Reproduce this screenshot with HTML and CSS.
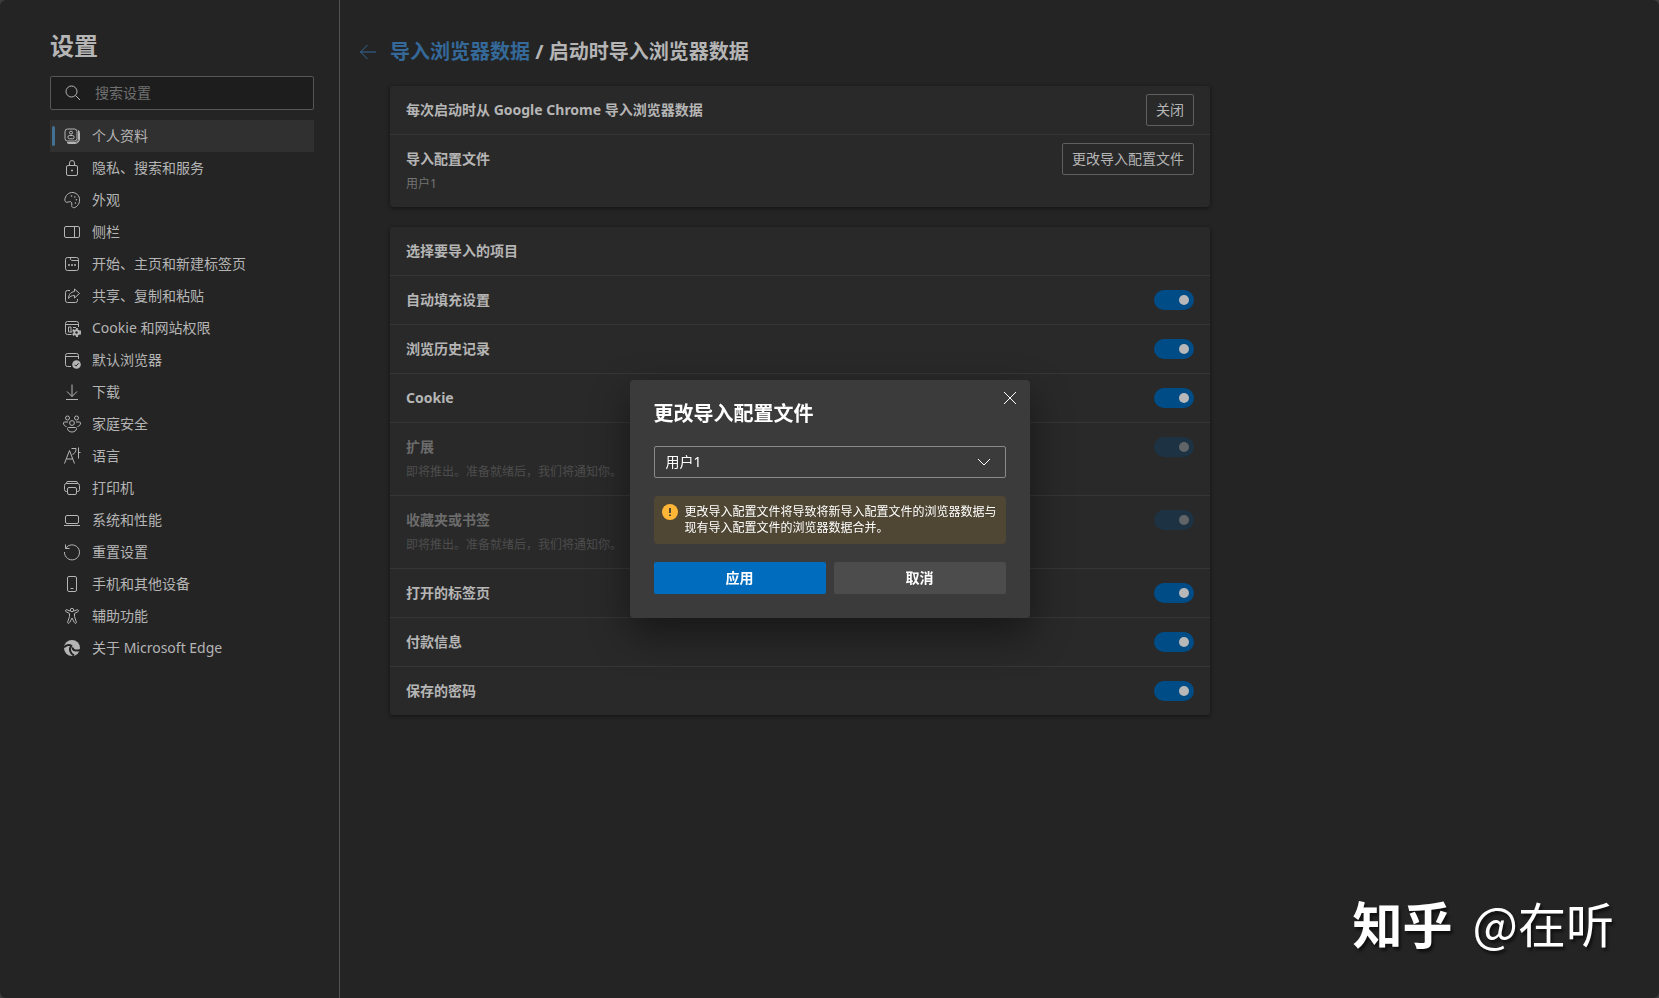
FILE: index.html
```
<!DOCTYPE html>
<html lang="zh-CN">
<head>
    <meta charset="UTF-8">
    <meta name="viewport" content="width=device-width, initial-scale=1.0">
    <title>设置</title>
    <link rel="stylesheet" href="styles.css">
</head>
<body>
    <div class="page">
        <aside class="sidebar">
            <h1 class="sidebar-title">设置</h1>
            <label class="search">
                <svg class="icon" viewBox="0 0 20 20"><circle cx="8.5" cy="8.5" r="5.5"/><path d="M12.5 12.5 17 17"/></svg>
                <input type="search" placeholder="搜索设置" aria-label="搜索设置">
            </label>
            <nav>
                <ul class="menu">
                    <li><a href="#" class="active">
                        <svg class="icon" viewBox="0 0 20 20"><rect x="3" y="3" width="12" height="12" rx="2.5"/><path d="M16.5 4.5c.7.5 1 1.200 1 2v6.500a4.500 4.500 0 0 1-4.500 4.500H7c-.8 0-1.500-.4-2-1h8a3.500 3.500 0 0 0 3.500-3.500z"/><circle cx="9" cy="6.700" r="1.500"/><rect x="6" y="9.500" width="6" height="3.300" rx="1.400"/></svg>
                        个人资料</a></li>
                    <li><a href="#">
                        <svg class="icon" viewBox="0 0 20 20"><rect x="4.500" y="7.500" width="11" height="10" rx="1.500"/><path d="M7.500 7.500V5a2.500 2.500 0 0 1 5 0v2.500"/><circle class="solid" cx="10" cy="12.500" r="1"/></svg>
                        隐私、搜索和服务</a></li>
                    <li><a href="#">
                        <svg class="icon" viewBox="0 0 20 20"><path d="M3 8.500C4.200 4 8.500 1.500 12.500 2.800c4.300 1.400 6.200 6.200 4.500 10.300-1.300 3.200-4.400 5.400-6.400 4.300-1.800-1-.2-3-1-4.700-.7-1.500-2-1.100-3.400-.6-2.400.8-4-.8-3.200-3.600z"/><circle class="solid" cx="9.500" cy="6" r=".8"/><circle class="solid" cx="12.800" cy="7" r=".8"/><circle class="solid" cx="14.400" cy="9.800" r=".8"/><circle class="solid" cx="13.400" cy="13" r=".8"/></svg>
                        外观</a></li>
                    <li><a href="#">
                        <svg class="icon" viewBox="0 0 20 20"><rect x="2.500" y="4.500" width="15" height="11" rx="1.500"/><path d="M12.500 4.500v11"/></svg>
                        侧栏</a></li>
                    <li><a href="#">
                        <svg class="icon" viewBox="0 0 20 20"><rect x="3.500" y="3.500" width="13" height="13" rx="2"/><path d="M8.500 3.500v1.500c0 .8.700 1.500 1.500 1.500h6.500"/><circle class="solid" cx="7" cy="11" r="1"/><circle class="solid" cx="10" cy="11" r="1"/><circle class="solid" cx="13" cy="11" r="1"/></svg>
                        开始、主页和新建标签页</a></li>
                    <li><a href="#">
                        <svg class="icon" viewBox="0 0 20 20"><path d="M8 4.500H5.500a2 2 0 0 0-2 2v8a2 2 0 0 0 2 2h8a2 2 0 0 0 2-2V13"/><path d="M12.500 3 17.500 7.500l-5 4.500V9.500c-3 0-4.700 1-6 3 .2-3.800 2-6.500 6-7z"/></svg>
                        共享、复制和粘贴</a></li>
                    <li><a href="#">
                        <svg class="icon" viewBox="0 0 20 20"><path d="M9.500 16.500h-4a2 2 0 0 1-2-2v-9a2 2 0 0 1 2-2h9a2 2 0 0 1 2 2V9M3.500 6.500h13M10 14H6.500V9H9v5M11 9.500h3"/><circle class="dots" cx="14.500" cy="14.500" r="3.600"/><circle class="solid" cx="14.500" cy="14.500" r="3.200"/><circle class="hole" cx="14.500" cy="14.500" r="1.200"/></svg>
                        Cookie 和网站权限</a></li>
                    <li><a href="#">
                        <svg class="icon" viewBox="0 0 20 20"><path d="M9 16.500H5.500a2 2 0 0 1-2-2v-9a2 2 0 0 1 2-2h9a2 2 0 0 1 2 2V9M3.500 6.500h13"/><circle class="solid" cx="14.500" cy="14.500" r="4.300"/><path class="cut" d="m12.500 14.700 1.400 1.400 2.700-2.800"/></svg>
                        默认浏览器</a></li>
                    <li><a href="#">
                        <svg class="icon" viewBox="0 0 20 20"><path d="M10 2.500v12M5 9.500l5 5 5-5M4 17.500h12"/></svg>
                        下载</a></li>
                    <li><a href="#">
                        <svg class="icon" viewBox="0 0 20 20"><circle cx="5.500" cy="4" r="2"/><circle cx="14.500" cy="4" r="2"/><circle cx="10" cy="9" r="2.400"/><path d="M6.500 13.500h7c.8 0 1 .5 1 1 0 2-2 3.500-4.500 3.500s-4.500-1.500-4.500-3.500c0-.5.200-1 1-1zM6 8H2.500c-.6 0-1 .3-1 1 0 2 1.300 3.300 3 3.500M14 8h3.500c.6 0 1 .3 1 1 0 2-1.300 3.300-3 3.500"/></svg>
                        家庭安全</a></li>
                    <li><a href="#">
                        <svg class="icon" viewBox="0 0 20 20"><path d="m2.500 17.500 5-13 5 13M4.500 13h6M9.500 2.500h4.500c0 3-1.200 5-3.500 6M16.500 1.500v11M16.500 6.500h2"/></svg>
                        语言</a></li>
                    <li><a href="#">
                        <svg class="icon" viewBox="0 0 20 20"><path d="M5.500 13.500h-1a2 2 0 0 1-2-2v-4a2 2 0 0 1 2-2h11a2 2 0 0 1 2 2v4a2 2 0 0 1-2 2h-1M4.500 5.500v-.5a1.500 1.500 0 0 1 1.500-1.500h8a1.500 1.500 0 0 1 1.500 1.500v.5"/><rect x="5.500" y="9.500" width="9" height="7" rx="1.500"/></svg>
                        打印机</a></li>
                    <li><a href="#">
                        <svg class="icon" viewBox="0 0 20 20"><rect x="3.500" y="5.500" width="13" height="8" rx="1.500"/><path d="M2 15.500h16"/></svg>
                        系统和性能</a></li>
                    <li><a href="#">
                        <svg class="icon" viewBox="0 0 20 20"><path d="M3.500 2.500v4h4M3.700 6.300A7.500 7.500 0 1 1 2.500 10"/></svg>
                        重置设置</a></li>
                    <li><a href="#">
                        <svg class="icon" viewBox="0 0 20 20"><rect x="5.500" y="2.500" width="9" height="15" rx="1.500"/><path d="M8.500 14.500h3"/></svg>
                        手机和其他设备</a></li>
                    <li><a href="#">
                        <svg class="icon" viewBox="0 0 20 20"><circle cx="10" cy="4" r="1.700"/><path d="M8.300 5.200 5 3.800c-1.500-.5-2.200 1.300-.8 2L7.500 7.500v3l-1.800 5.300c-.5 1.600 1.300 2.200 1.900.8L10 12l2.400 4.600c.6 1.400 2.400.8 1.900-.8l-1.800-5.300v-3l3.300-1.700c1.400-.7.700-2.500-.8-2l-3.300 1.400"/></svg>
                        辅助功能</a></li>
                    <li><a href="#">
                        <svg class="icon" viewBox="0 0 20 20"><circle class="solid" cx="10" cy="10" r="8"/><path class="swirl" d="M2 9.500c2-3 6.500-3.300 8-1M9.300 8.200C6.800 10.500 8 15.500 12 17.500M11 9.500c-.8 2.500 2.500 4 7 2.500"/></svg>
                        关于 Microsoft Edge</a></li>
                </ul>
            </nav>
        </aside>

        <main class="content">
            <h2 class="breadcrumb">
                <a href="#" class="back" aria-label="返回">
                    <svg class="icon" viewBox="0 0 20 20"><path d="M18 10H2.500M9.500 3l-7 7 7 7"/></svg>
                </a>
                <span><a href="#">导入浏览器数据</a> / 启动时导入浏览器数据</span>
            </h2>

            <section class="card">
                <div class="row">
                    <div class="label">每次启动时从 Google Chrome 导入浏览器数据</div>
                    <button type="button" class="btn">关闭</button>
                </div>
                <div class="row tall">
                    <div>
                        <div class="label">导入配置文件</div>
                        <div class="hint">用户1</div>
                    </div>
                    <button type="button" class="btn">更改导入配置文件</button>
                </div>
            </section>

            <section class="card">
                <div class="row"><div class="label">选择要导入的项目</div></div>
                <div class="row">
                    <label class="label" for="autofill">自动填充设置</label>
                    <input type="checkbox" class="toggle" id="autofill" checked>
                </div>
                <div class="row">
                    <label class="label" for="history">浏览历史记录</label>
                    <input type="checkbox" class="toggle" id="history" checked>
                </div>
                <div class="row">
                    <label class="label" for="cookie">Cookie</label>
                    <input type="checkbox" class="toggle" id="cookie" checked>
                </div>
                <div class="row tall disabled">
                    <div>
                        <label class="label" for="extensions">扩展</label>
                        <div class="hint">即将推出。准备就绪后，我们将通知你。</div>
                    </div>
                    <input type="checkbox" class="toggle" id="extensions" checked disabled>
                </div>
                <div class="row tall disabled">
                    <div>
                        <label class="label" for="favorites">收藏夹或书签</label>
                        <div class="hint">即将推出。准备就绪后，我们将通知你。</div>
                    </div>
                    <input type="checkbox" class="toggle" id="favorites" checked disabled>
                </div>
                <div class="row">
                    <label class="label" for="tabs">打开的标签页</label>
                    <input type="checkbox" class="toggle" id="tabs" checked>
                </div>
                <div class="row">
                    <label class="label" for="payment">付款信息</label>
                    <input type="checkbox" class="toggle" id="payment" checked>
                </div>
                <div class="row">
                    <label class="label" for="passwords">保存的密码</label>
                    <input type="checkbox" class="toggle" id="passwords" checked>
                </div>
            </section>
        </main>
    </div>

    <div class="overlay">
        <div class="dialog" role="dialog" aria-labelledby="dialogTitle">
            <button type="button" class="close" aria-label="关闭">
                <svg viewBox="0 0 12 12"><path d="m0 0 12 12M12 0 0 12"/></svg>
            </button>
            <h2 id="dialogTitle">更改导入配置文件</h2>
            <div class="select">
                <select aria-label="配置文件">
                    <option>用户1</option>
                </select>
                <svg viewBox="0 0 12 8"><path d="m0 1 6 6 6-6"/></svg>
            </div>
            <div class="warning">
                <svg viewBox="0 0 16 16"><circle cx="8" cy="8" r="8"/><path d="M8 4v5M8 10.500v1.500"/></svg>
                <p>更改导入配置文件将导致将新导入配置文件的浏览器数据与现有导入配置文件的浏览器数据合并。</p>
            </div>
            <div class="actions">
                <button type="button" class="primary">应用</button>
                <button type="button">取消</button>
            </div>
        </div>
    </div>

    <div class="watermark"><b>知乎</b><span>@在听</span></div>
</body>
</html>
```
FILE: styles.css
```
* {
    box-sizing: border-box;
}

body {
    margin: 0;
    background-color: #3c3c3c;
    color: #b5b5b5;
    font-family: "Noto Sans", "Noto Sans CJK SC", sans-serif;
    font-size: 14px;
    line-height: 20px;
}

h1, h2, p, ul {
    margin: 0;
    padding: 0;
}

a {
    color: inherit;
    text-decoration: none;
}

button, input, select {
    font: inherit;
    color: inherit;
}

svg {
    fill: none;
    stroke: currentColor;
}

.page {
    display: flex;
    min-height: 100vh;
    background-color: #242424;
    border-radius: 6px;
}

/* sidebar */
.sidebar {
    width: 340px;
    flex-shrink: 0;
    padding: 30px 25px 30px 50px;
    border-right: 1px solid #515151;
}

.sidebar-title {
    font-size: 24px;
    line-height: 32px;
}

.search {
    display: flex;
    align-items: center;
    gap: 12px;
    height: 34px;
    margin: 14px 0 10px;
    padding: 0 12px;
    background-color: #1d1d1d;
    border: 1px solid #565656;
    border-radius: 2px;
}

.search input {
    flex: 1;
    min-width: 0;
    padding: 0;
    border: 0;
    outline: 0;
    background: none;
}

.search input::placeholder {
    color: #707070;
}

.icon {
    width: 20px;
    height: 20px;
    flex-shrink: 0;
}

.icon .solid {
    fill: currentColor;
    stroke: none;
}

.icon .dots {
    stroke-dasharray: 2 2;
    stroke-width: 2;
}

.icon .hole {
    fill: #242424;
    stroke: none;
}

.icon .cut {
    stroke: #242424;
}

.icon .swirl {
    stroke: #242424;
    stroke-width: 2;
}

.menu {
    list-style: none;
}

.menu a {
    display: flex;
    align-items: center;
    gap: 10px;
    height: 32px;
    padding: 0 12px;
    position: relative;
}

.menu .active {
    background-color: #303030;
}

.menu .active::before {
    content: "";
    position: absolute;
    left: 2px;
    top: 6px;
    width: 3px;
    height: 20px;
    border-radius: 2px;
    background-color: #43718f;
}

/* content */
.content {
    flex: 1;
    padding: 38px 50px;
}

.breadcrumb {
    display: flex;
    align-items: center;
    gap: 12px;
    margin-bottom: 20px;
    margin-left: -32px;
    font-size: 20px;
    line-height: 28px;
}

.breadcrumb a {
    color: #34699a;
}

.breadcrumb .back {
    display: flex;
}

.card {
    max-width: 820px;
    margin-bottom: 20px;
    background-color: #292929;
    border-radius: 3px;
    box-shadow: 0 1px 4px rgba(0, 0, 0, 0.5);
}

.row {
    display: flex;
    justify-content: space-between;
    align-items: flex-start;
    min-height: 48px;
    padding: 8px 16px;
}

.row + .row {
    border-top: 1px solid #363636;
    min-height: 49px;
}

.row + .tall {
    min-height: 73px;
}

.label {
    display: block;
    margin: 6px 0;
    font-weight: bold;
}

.hint {
    font-size: 12px;
    line-height: 18px;
    color: #747474;
}

.disabled .label {
    color: #6b6b6b;
}

.disabled .hint {
    color: #4d4d4d;
}

.btn {
    height: 32px;
    padding: 0 9px;
    background: none;
    border: 1px solid #5f5f5f;
    border-radius: 2px;
}

.toggle {
    appearance: none;
    width: 40px;
    height: 20px;
    margin: 6px 0;
    padding: 5px;
    border-radius: 10px;
    background-color: #004c87;
}

.toggle::before {
    content: "";
    display: block;
    width: 10px;
    height: 10px;
    margin-left: 20px;
    border-radius: 50%;
    background-color: #b8b8b8;
}

.toggle:disabled {
    background-color: #1d3242;
}

.toggle:disabled::before {
    background-color: #626568;
}

/* dialog */
.overlay {
    position: fixed;
    inset: 0;
    display: flex;
    align-items: center;
    justify-content: center;
}

.dialog {
    position: relative;
    display: flex;
    flex-direction: column;
    gap: 18px;
    width: 400px;
    padding: 20px 24px 24px;
    background-color: #3b3b3b;
    color: #fff;
    border-radius: 4px;
    box-shadow: 0 16px 40px rgba(0, 0, 0, 0.45);
}

.dialog h2 {
    font-size: 20px;
    line-height: 28px;
}

.close {
    position: absolute;
    top: 8px;
    right: 10px;
    display: flex;
    padding: 4px;
    background: none;
    border: 0;
}

.close svg {
    width: 12px;
    height: 12px;
    overflow: visible;
}

.select {
    display: grid;
    align-items: center;
}

.select select {
    grid-area: 1 / 1;
    appearance: none;
    height: 32px;
    padding: 0 11px;
    background: none;
    border: 1px solid #8a8a8a;
    border-radius: 2px;
}

.select svg {
    grid-area: 1 / 1;
    justify-self: end;
    width: 12px;
    height: 8px;
    margin-right: 16px;
    pointer-events: none;
}

.warning {
    display: flex;
    gap: 7px;
    padding: 8px;
    border-radius: 4px;
    background-color: #4f4633;
    font-size: 12px;
    line-height: 16px;
}

.warning svg {
    width: 16px;
    height: 16px;
    flex-shrink: 0;
    fill: #ffb536;
    stroke: none;
}

.warning path {
    stroke: #4f4633;
    stroke-width: 2;
}

.actions {
    display: flex;
    gap: 8px;
}

.actions button {
    flex: 1;
    height: 32px;
    background-color: #4c4c4c;
    border: 0;
    border-radius: 2px;
    font-weight: bold;
}

.actions .primary {
    background-color: #006cbe;
}

.watermark {
    position: fixed;
    right: 45px;
    bottom: 46px;
    display: flex;
    align-items: center;
    gap: 20px;
    color: #fff;
    font-family: "Noto Sans CJK SC", sans-serif;
    font-size: 48px;
    line-height: 60px;
    text-shadow: 2px 3px 3px rgba(0, 0, 0, 0.6);
}

.watermark b {
    font-size: 50px;
}
```
